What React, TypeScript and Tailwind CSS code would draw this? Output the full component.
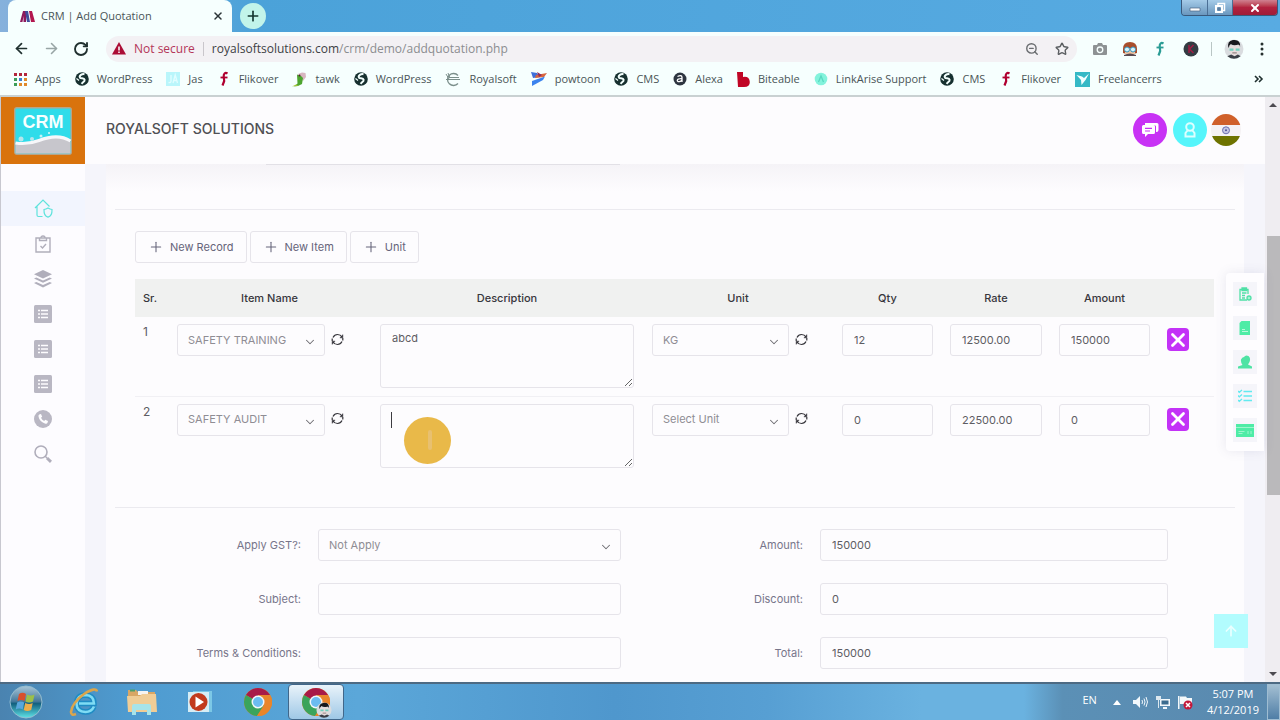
import type { ReactNode } from "react";
import { ArrowLeft, ArrowRight, RotateCw, Star, ZoomOut, Plus, X, ChevronDown, ArrowUp } from "lucide-react";

const GlobeIcon = () => (
  <svg viewBox="0 0 14 14" className="size-3.5">
    <circle cx="7" cy="7" r="6.8" fill="#16302f" />
    <path d="M9.5 2.2C7 1.6 3.8 3.6 5 5.6c.8 1.2 4.200.2 4.600 2.200.3 1.700-1.800 2.400-3 4" fill="none" stroke="#f3fffd" strokeWidth="2" />
    <path d="M1.500 6.500 4 8.500" stroke="#f3fffd" strokeWidth="1.300" />
  </svg>
);

const FlikoverIcon = ({ color = "#b00030" }: { color?: string }) => (
  <svg viewBox="0 0 14 16" className="h-4 w-3.5" fill="none" stroke={color}>
    <path d="M10.500 2.500C8 1 6.600 3 6.700 5.500L7.200 10 5.500 14.500" strokeWidth="2.200" />
    <path d="M3.500 6.500H10.500" strokeWidth="1.800" />
  </svg>
);

const AppsIcon = () => (
  <svg viewBox="0 0 13 13" className="size-[13px]">
    <path d="M0 0h3v3H0zM5 0h3v3H5zM10 0h3v3h-3z" fill="#b3263c" />
    <path d="M0 5h3v3H0z" fill="#3c9d58" />
    <path d="M5 5h3v3H5z" fill="#3c7fd0" />
    <path d="M10 5h3v3h-3zM5 10h3v3H5zM10 10h3v3h-3z" fill="#e08a2a" />
    <path d="M0 10h3v3H0z" fill="#3c9d58" />
  </svg>
);

const JasIcon = () => (
  <svg viewBox="0 0 14 14" className="size-3.5">
    <path d="M0 0h14v14H0z" fill="#b9f6fb" />
    <path d="M5 3v6q0 2-2.500 1.500M7 11l2.200-8L11.500 11M8 8.500h3" fill="none" stroke="#e2fdff" strokeWidth="1.300" />
  </svg>
);

const TawkIcon = () => (
  <svg viewBox="0 0 15 15" className="size-[15px]">
    <path d="M6 2 10 .5 13.500 1 14 5l-3 4-2-4z" fill="#d8b6c0" />
    <path d="M5 2.500 9 4l2 2-1 6-4 2-4 .5 3.500-3z" fill="#4da52f" />
    <path d="M0 14.500 4 12.500l3 1z" fill="#a6c43a" />
    <circle cx="7.500" cy="3.500" r="1" fill="#523" />
  </svg>
);

const RoyalsoftIcon = () => (
  <svg viewBox="0 0 16 15" className="h-[15px] w-4" fill="none" stroke="#7b8f8b">
    <path d="M13 3.500A6 6 0 1 0 13 11.500" strokeWidth="1.300" />
    <path d="M1 2l3 5M3 1l2 5M1 7.500h14M4 5.500h10" />
  </svg>
);

const PowtoonIcon = () => (
  <svg viewBox="0 0 16 14" className="h-3.5 w-4">
    <path d="M0 0 6 1 9 5 2 6z" fill="#3f6fd9" />
    <path d="M5 3 16 1 13 5 4 6z" fill="#d8653d" />
    <path d="M6 0 11 3 8 5z" fill="#8e2a5e" />
    <path d="M1 9 14 4.500 12 8 1 14z" fill="#3b83ee" />
  </svg>
);

const AlexaIcon = () => (
  <svg viewBox="0 0 14 14" className="size-3.5">
    <circle cx="7" cy="7" r="6.500" fill="#2d3540" />
    <path d="M4.500 4.500Q9 2.500 9 5.500V10M9 6.700C3 6.300 3.500 10 6.200 9.700 8 9.500 9 8 9 7.500" fill="none" stroke="#fff" strokeWidth="1.300" />
  </svg>
);

const BiteableIcon = () => (
  <svg viewBox="0 0 13 15" className="h-[15px] w-[13px]">
    <path d="M0 0h6v5q6.500-1 6.800 5Q13 15 7 15H1z" fill="#c00625" />
  </svg>
);

const LinkAriseIcon = () => (
  <svg viewBox="0 0 14 14" className="size-3.5">
    <circle cx="7" cy="7" r="6.300" fill="#83f3dc" />
    <path d="M4.500 10 7 4l2.500 6" fill="none" stroke="#58d9c0" strokeWidth="1.300" />
  </svg>
);

const FreelancerIcon = () => (
  <svg viewBox="0 0 15 15" className="size-[15px]">
    <path d="M0 0h15v15H0z" fill="#35b9c6" />
    <path d="M1.500 3 7 4.500 9 6 14 1.500 10.500 8 6.500 13 6 8z" fill="#f2ffff" />
  </svg>
);

const bookmarks: { label: string; icon: ReactNode }[] = [
  { label: "Apps", icon: <AppsIcon /> },
  { label: "WordPress", icon: <GlobeIcon /> },
  { label: "Jas", icon: <JasIcon /> },
  { label: "Flikover", icon: <FlikoverIcon /> },
  { label: "tawk", icon: <TawkIcon /> },
  { label: "WordPress", icon: <GlobeIcon /> },
  { label: "Royalsoft", icon: <RoyalsoftIcon /> },
  { label: "powtoon", icon: <PowtoonIcon /> },
  { label: "CMS", icon: <GlobeIcon /> },
  { label: "Alexa", icon: <AlexaIcon /> },
  { label: "Biteable", icon: <BiteableIcon /> },
  { label: "LinkArise Support", icon: <LinkAriseIcon /> },
  { label: "CMS", icon: <GlobeIcon /> },
  { label: "Flikover", icon: <FlikoverIcon /> },
  { label: "Freelancerrs", icon: <FreelancerIcon /> },
];

function Face({ className }: { className: string }) {
  return (
    <svg viewBox="0 0 18 18" className={className}>
      <circle cx="9" cy="9" r="8.500" fill="#d9dcdf" />
      <path d="M4 8Q2.500 2 8 1 15 0 14.500 7L13 5Q9 6.500 6 4.500z" fill="#17191d" />
      <path d="M5 5.500Q9 7 14 5.500V11Q12.500 15 9.500 15 6 15 5 11z" fill="#e6dcdb" />
      <path d="M5 8.500h3.500v2H5zM10.500 8.500H14v2h-3.500z" fill="#6fd0be" />
      <path d="M7.500 12.500h4" stroke="#8b7a7a" />
      <path d="M3 15.500 6.500 14l3 1.500 3-1.500 2.500 1.500Q9 20 3 15.500z" fill="#3a3f46" />
    </svg>
  );
}

function BrowserChrome() {
  return (
    <div className="shrink-0 font-['Open_Sans',sans-serif] text-[#4a5557]">
      <div className="flex h-8 items-end bg-linear-to-r from-[#86b1dc] via-[#4ba2d9] via-20% to-[#58abe2]">
        <div className="ml-2 flex h-8 w-56 items-center rounded-t-lg bg-[#f6fffe] pr-1.5 pl-3">
          <svg viewBox="0 0 15 11" className="h-[11px] w-[15px]">
            <path d="M0 11 3 0h3v11H3.500V5L2.500 11z" fill="#8d1a5c" />
            <path d="M5 0h3l2 11H7z" fill="#3f4d9c" />
            <path d="M9 0h3l3 11h-4z" fill="#b3174f" />
          </svg>
          <span className="ml-1.5 flex-1 text-[11px]">CRM | Add Quotation</span>
          <button aria-label="Close tab" className="flex size-4 items-center justify-center text-[#2b3537]">
            <X className="size-3" strokeWidth={3} />
          </button>
        </div>
        <button aria-label="New tab" className="mb-[3px] ml-2 flex size-[26px] items-center justify-center rounded-full bg-[#c2f4ea] text-[#14352f]">
          <Plus className="size-4" strokeWidth={2.5} />
        </button>
        <div className="mr-[2px] ml-auto flex h-4 self-start overflow-hidden rounded-b border border-t-0 border-[#39597c]">
          <button aria-label="Minimize" className="flex w-[26px] items-center justify-center border-r border-[#4b6f95] bg-linear-to-b from-[#a5cbe8] to-[#6a97be]">
            <svg viewBox="0 0 12 6" className="mt-1 h-1.5 w-3">
              <path d="M1 1h10v3H1z" fill="#fff" stroke="#476283" strokeWidth=".7" />
            </svg>
          </button>
          <button aria-label="Restore" className="flex w-[25px] items-center justify-center border-r border-[#4b6f95] bg-linear-to-b from-[#a5cbe8] to-[#6a97be]">
            <svg viewBox="0 0 12 12" className="size-3" fill="none">
              <path d="M4 3V1.500h6.500v7H9" stroke="#fff" strokeWidth="1.500" />
              <path d="M2 4h6v6H2z" stroke="#fff" strokeWidth="2" />
              <path d="M4 6h2v2H4z" stroke="#476283" strokeWidth=".8" />
            </svg>
          </button>
          <button aria-label="Close" className="flex w-11 items-center justify-center bg-linear-to-b from-[#cf8091] via-[#b2213f] to-[#a01c38] text-white">
            <X className="size-3" strokeWidth={4} />
          </button>
        </div>
      </div>

      <div className="flex h-[33px] items-center bg-[#f6fffe] pr-4 pl-3">
        <button aria-label="Back" className="flex w-[18px] justify-center text-[#20302f]">
          <ArrowLeft className="size-[17px]" strokeWidth={2.4} />
        </button>
        <button aria-label="Forward" className="ml-3 flex w-[18px] justify-center text-[#98a5a5]">
          <ArrowRight className="size-[17px]" strokeWidth={2.2} />
        </button>
        <button aria-label="Reload" className="ml-3 flex w-[18px] justify-center text-[#20302f]">
          <RotateCw className="size-4" strokeWidth={2.8} />
        </button>
        <div className="ml-4 flex h-[26px] flex-1 items-center rounded-full bg-[#f3f1f4] pr-2 pl-1.5 text-xs">
          <svg viewBox="0 0 14 13" className="h-[13px] w-3.5">
            <path d="M7 0 14 12.500H0z" fill="#ab0c35" />
            <path d="M7 4.500v4M7 9.500v1.500" stroke="#fff" strokeWidth="1.500" />
          </svg>
          <span className="ml-2 text-[#b43558]">Not secure</span>
          <span className="mx-2 h-3.5 w-px bg-[#c9c6cb]" />
          <span className="flex-1 whitespace-nowrap text-[#3d4144]">
            royalsoftsolutions.com<span className="text-[#8b8d90]">/crm/demo/addquotation.php</span>
          </span>
          <button aria-label="Zoom" className="text-[#6a6d70]">
            <ZoomOut className="size-3.5" strokeWidth={2.4} />
          </button>
          <button aria-label="Bookmark this page" className="ml-4 text-[#5b5e61]">
            <Star className="size-3.5" strokeWidth={2.4} />
          </button>
        </div>
        <div className="ml-4 flex items-center gap-4">
          <svg viewBox="0 0 14 12" className="h-3 w-3.5">
            <path d="M1 2h3l1-2h4l1 2h3q1 0 1 1v8q0 1-1 1H1q-1 0-1-1V3q0-1 1-1z" fill="#8d9294" />
            <circle cx="7" cy="6.800" r="2.800" fill="none" stroke="#f6fffe" strokeWidth="1.300" />
          </svg>
          <svg viewBox="0 0 14 14" className="size-3.5">
            <path d="M0 7Q0 0 7 0t7 7v4l-7 2-7-2z" fill="#a94e2c" />
            <path d="M2 6h10v6H2z" fill="#efc3a2" />
            <circle cx="4" cy="7.500" r="2.500" fill="#d7f4fc" stroke="#3794bd" />
            <circle cx="10" cy="7.500" r="2.500" fill="#d7f4fc" stroke="#3794bd" />
            <path d="M1 13q6-3 12 0v1H1z" fill="#5a4a50" />
          </svg>
          <FlikoverIcon color="#2b9c95" />
          <svg viewBox="0 0 16 16" className="size-4">
            <circle cx="8" cy="8" r="7.500" fill="#333b42" />
            <path d="M6 4v8M10.500 4 6.500 8l4 4" fill="none" stroke="#a01c44" strokeWidth="1.500" />
          </svg>
          <span className="-mx-1 h-3.5 w-px bg-[#b9c6c5]" />
          <Face className="size-5" />
          <button aria-label="Menu">
            <svg viewBox="0 0 4 14" className="h-3.5 w-1" fill="#26302f">
              <circle cx="2" cy="2" r="1.500" />
              <circle cx="2" cy="7" r="1.500" />
              <circle cx="2" cy="12" r="1.500" />
            </svg>
          </button>
        </div>
      </div>

      <nav className="flex h-8 items-center border-b-2 border-[#c9d1d2] bg-[#f6fffe] pr-4 pb-0.5 pl-3.5">
        <ul className="mr-[92px] flex flex-1 items-center justify-between text-[11px]">
          {bookmarks.map((b, i) => (
            <li key={i}>
              <a href="#" className="flex items-center gap-2 whitespace-nowrap">
                {b.icon}
                {b.label}
              </a>
            </li>
          ))}
        </ul>
        <button aria-label="More bookmarks" className="text-[#20302f]">
          <svg viewBox="0 0 10 8" className="h-2 w-2.5" fill="none" stroke="currentColor" strokeWidth="1.600">
            <path d="M1 1l3 3-3 3M5 1l3 3-3 3" />
          </svg>
        </button>
      </nav>
    </div>
  );
}

const ListIcon = () => (
  <svg viewBox="0 0 18 18" className="size-[18px]">
    <rect width="18" height="18" rx="1.500" fill="#b9b7c3" />
    <path d="M4 5.500h2M4 9h2M4 12.500h2M7 5.500H14M7 9H14M7 12.500H14" stroke="#fdfcfe" strokeWidth="1.500" />
  </svg>
);

const sideItems = [
  {
    name: "Dashboard",
    icon: (
      <svg viewBox="0 0 19 19" className="size-[19px]" fill="none" stroke="#5fe3dc" strokeWidth="1.200">
        <path d="M1 9 9 1l6.500 6.500M3 7.500V16q0 1.500 1.500 1.500H8.500" />
        <path d="M14 9q2 1.200 4 1.500.3 6.500-4 7.700-4.300-1.200-4-7.700 2-.3 4-1.500z" />
      </svg>
    ),
  },
  {
    name: "Tasks",
    icon: (
      <svg viewBox="0 0 18 18" className="size-[18px]" fill="none" stroke="#b0aebb" strokeWidth="1.400">
        <path d="M2 3h14v14H2zM5.500 3v2.500h7V3" />
        <path d="M7 3q0-2 2-2t2 2M6.500 11l2 2 3.500-4" />
      </svg>
    ),
  },
  {
    name: "Layers",
    icon: (
      <svg viewBox="0 0 18 18" className="size-[18px]" fill="#b0aebb">
        <path d="M9 0l9 4.200L9 8.400 0 4.200z" />
        <path d="M0 8.500l2.300-1L9 10.500l6.700-3 2.300 1-9 4.200z" />
        <path d="M0 13l2.300-1L9 15l6.700-3 2.300 1-9 4.500z" />
      </svg>
    ),
  },
  { name: "Leads", icon: <ListIcon /> },
  { name: "Quotations", icon: <ListIcon /> },
  { name: "Invoices", icon: <ListIcon /> },
  {
    name: "Calls",
    icon: (
      <svg viewBox="0 0 18 18" className="size-[18px]">
        <circle cx="9" cy="9" r="9" fill="#b9b7c3" />
        <path d="M5.200 4.500 7 4l1.200 2.800-1.200 1q1 2.200 3.200 3.200l1-1.200L14 11l-.5 1.800Q13 14 11.500 13.700 5.500 12 4.500 6.500 4.300 5 5.200 4.500z" fill="#fdfcfe" />
      </svg>
    ),
  },
  {
    name: "Search",
    icon: (
      <svg viewBox="0 0 18 18" className="size-[18px]" fill="none" stroke="#b0aebb">
        <circle cx="7" cy="7" r="6" strokeWidth="1.600" />
        <path d="M11 11l2 2" strokeWidth="1.500" />
        <path d="M13 13l4 3.800" strokeWidth="3" />
      </svg>
    ),
  },
];

function Sidebar() {
  return (
    <aside className="flex w-[85px] shrink-0 flex-col border-l border-[#c8c8d0] bg-[#fdfcff]">
      <a href="#" aria-label="CRM home" className="flex h-[67px] items-center justify-center bg-[#d9730d]">
        <svg viewBox="0 0 58 48" className="h-12 w-[58px]">
          <rect x=".7" y=".7" width="56.600" height="46.600" rx="2" fill="#2fdcea" stroke="#b5a489" strokeWidth="1.400" />
          <path d="M1.500 36Q13 38 25 33.500 44 26 56.500 35V46.500h-55z" fill="#c7c6cc" />
          <path d="M1.500 36Q13 38 25 33.500 44 26 56.500 34" fill="none" stroke="#f7f7fa" strokeWidth="3" />
          <circle cx="7" cy="32" r="2.500" fill="#b5e6ec" />
          <circle cx="18" cy="32" r="2" fill="#b5e6ec" />
          <circle cx="27" cy="29" r="1.500" fill="#c9f3f6" />
          <circle cx="35" cy="26" r="1" fill="#d9fafb" />
          <text x="29" y="21" textAnchor="middle" fontSize="18" fontWeight="700" fill="#f8ffff" fontFamily="Liberation Sans, sans-serif">
            CRM
          </text>
        </svg>
      </a>
      <ul className="mt-[27px]">
        {sideItems.map((item, i) => (
          <li key={item.name}>
            <a
              href="#"
              aria-label={item.name}
              className={`flex h-[35px] items-center justify-center ${i === 0 ? "bg-[#f2f5fe]" : ""}`}
            >
              {item.icon}
            </a>
          </li>
        ))}
      </ul>
    </aside>
  );
}

function Header() {
  return (
    <header className="flex h-[67px] items-center bg-[#fdfcfe] pr-6 pb-0.5 pl-[21px]">
      <h1 className="pb-0.5 text-sm font-medium text-[#505055]">ROYALSOFT SOLUTIONS</h1>
      <div className="ml-auto flex items-center gap-1.5">
        <button aria-label="Messages" className="flex size-[34px] items-center justify-center rounded-full bg-[#c832f5]">
          <svg viewBox="0 0 18 16" className="h-4 w-[18px]">
            <path d="M4 1h12q1.500 0 1.500 1.500V8Q17.500 10 15.500 10H15V4.500Q15 3.500 14 3.500H4z" fill="#fff" />
            <path d="M2.500 3h10Q14 3 14 4.500v6q0 1.500-1.500 1.500H7l-3 3v-3H2.500Q1 12 1 10.500v-6Q1 3 2.500 3z" fill="#fff" />
            <path d="M4 6.300h7M4 9h5" stroke="#c832f5" strokeWidth="1.200" />
          </svg>
        </button>
        <button aria-label="Account" className="flex size-[34px] items-center justify-center rounded-full bg-[#55f5fb]">
          <svg viewBox="0 0 12 16" className="h-4 w-3" fill="none" stroke="#ddffff" strokeWidth="2">
            <circle cx="6" cy="5" r="3.800" />
            <path d="M3.500 8.500 1.500 11v3.500h9V11l-2-2.500" />
          </svg>
        </button>
        <button aria-label="Language" className="-ml-0.5">
          <svg viewBox="1 1 30 32" className="h-8 w-[30px]">
            <clipPath id="flag">
              <ellipse cx="16" cy="17" rx="15" ry="16" />
            </clipPath>
            <g clipPath="url(#flag)">
              <path d="M0 0h32v12H0z" fill="#d0602a" />
              <path d="M0 12h32v11H0z" fill="#f5f2f4" />
              <path d="M0 23h32v11H0z" fill="#6e7300" />
            </g>
            <circle cx="16" cy="17.300" r="3.500" fill="#c5c6e4" stroke="#6c70b0" />
            <circle cx="16" cy="17.300" r="1" fill="#4d5299" />
          </svg>
        </button>
      </div>
    </header>
  );
}

const field =
  "h-8 w-full rounded-[3px] border border-[#e6e4ea] bg-[#fdfcfe] px-[11px] text-[11px] text-[#5d5c63] outline-none";

function SelectBox({ id, label, options }: { id?: string; label?: string; options: string[] }) {
  return (
    <div className="relative min-w-0 flex-1">
      <select id={id} aria-label={label} className={`${field} appearance-none pr-7 pl-2.5 text-[#8f8d94]`}>
        {options.map((o) => (
          <option key={o}>{o}</option>
        ))}
      </select>
      <ChevronDown className="pointer-events-none absolute top-[11px] right-2 size-3.5 text-[#6d6c72]" strokeWidth={1.8} />
    </div>
  );
}

function Refresh({ label }: { label: string }) {
  return (
    <button aria-label={label} className="ml-1.5 shrink-0 pb-0.5">
      <svg viewBox="0 0 13 13" className="size-[13px]" fill="none" stroke="#35343a" strokeWidth="1.200">
        <path d="M2 4.500Q3.500 1.500 6.500 1.500 9.500 1.500 11 4M11 8.500Q9.500 11.500 6.500 11.500 3.500 11.500 2 9M1.200 5.500V8M11.800 5v2.500" />
        <path d="M11.800 1.500V4.800H8.800M1.200 11.500V8.200h3" fill="#35343a" strokeWidth=".6" />
      </svg>
    </button>
  );
}

const rows = [
  { item: "SAFETY TRAINING", description: "abcd", unit: "KG", qty: "12", rate: "12500.00", amount: "150000" },
  { item: "SAFETY AUDIT", description: "", unit: "Select Unit", qty: "0", rate: "22500.00", amount: "0" },
];

function ItemsTable() {
  return (
    <table className="mt-4 w-full table-fixed border-collapse text-xs text-[#5d5c63]">
      <colgroup>
        <col className="w-[33px]" />
        <col className="w-[203px]" />
        <col className="w-[272px]" />
        <col className="w-[190px]" />
        <col className="w-[109px]" />
        <col className="w-[108px]" />
        <col className="w-[109px]" />
        <col className="w-[55px]" />
      </colgroup>
      <thead>
        <tr className="h-[38px] bg-[#f0f1f0] text-[11px] text-[#37363c]">
          <th className="pl-2 text-left font-medium">Sr.</th>
          {["Item Name", "Description", "Unit", "Qty", "Rate", "Amount"].map((h) => (
            <th key={h} className="font-medium">
              {h}
            </th>
          ))}
          <th />
        </tr>
      </thead>
      <tbody>
        {rows.map((row, i) => (
          <tr key={row.item} className="h-[79px] border-b border-[#f1f0f4] align-top last:border-b-0">
            <td className="pt-[7px] pl-2">{i + 1}</td>
            <td className="px-[9px] pt-[7px]">
              <div className="flex items-center pr-[18px]">
                <SelectBox label={`Item ${i + 1}`} options={[row.item]} />
                <Refresh label="Reload items" />
              </div>
            </td>
            <td className="px-[9px] pt-[7px]">
              <div className="relative">
                <textarea
                  aria-label={`Description ${i + 1}`}
                  defaultValue={row.description}
                  className={`${field} block h-16 py-1.5`}
                />
                {i === 1 && (
                  <>
                    <span className="absolute top-2 left-[11px] h-4 w-px bg-[#3c3b41]" />
                    <span className="absolute top-[13px] left-6 flex size-[47px] items-center justify-center rounded-full bg-[#e9b949]">
                      <span className="ml-1 h-5 w-1 rounded bg-[#e8c070]" />
                    </span>
                  </>
                )}
              </div>
            </td>
            <td className="px-[9px] pt-[7px]">
              <div className="flex items-center pr-4">
                <SelectBox label={`Unit ${i + 1}`} options={[row.unit]} />
                <Refresh label="Reload units" />
              </div>
            </td>
            <td className="px-[9px] pt-[7px]">
              <input aria-label={`Qty ${i + 1}`} defaultValue={row.qty} className={field} />
            </td>
            <td className="px-2 pt-[7px]">
              <input aria-label={`Rate ${i + 1}`} defaultValue={row.rate} className={field} />
            </td>
            <td className="px-[9px] pt-[7px]">
              <input aria-label={`Amount ${i + 1}`} defaultValue={row.amount} className={field} />
            </td>
            <td className="px-2 pt-[11px]">
              <button
                aria-label={`Remove row ${i + 1}`}
                className="flex h-[23px] w-[22px] items-center justify-center rounded-sm bg-[#c332f7] text-white"
              >
                <X className="size-[22px]" strokeWidth={3} />
              </button>
            </td>
          </tr>
        ))}
      </tbody>
    </table>
  );
}

function Totals() {
  return (
    <form className="mx-[9px] flex border-t border-[#ebeaef] pt-[21px] text-[11px] text-[#77758a]">
      <div className="flex w-[506px] shrink-0 flex-col gap-[22px]">
        <div className="flex items-center">
          <label htmlFor="gst" className="w-[186px] text-right">
            Apply GST?:
          </label>
          <div className="ml-[17px] flex flex-1">
            <SelectBox id="gst" options={["Not Apply", "Apply"]} />
          </div>
        </div>
        {[
          ["subject", "Subject:"],
          ["terms", "Terms & Conditions:"],
        ].map(([id, label]) => (
          <div key={id} className="flex items-center">
            <label htmlFor={id} className="w-[186px] text-right">
              {label}
            </label>
            <div className="ml-[17px] flex-1">
              <input id={id} className={field} />
            </div>
          </div>
        ))}
      </div>
      <div className="mr-[67px] flex flex-1 flex-col gap-[22px]">
        {[
          ["amount", "Amount:", "150000"],
          ["discount", "Discount:", "0"],
          ["total", "Total:", "150000"],
        ].map(([id, label, value]) => (
          <div key={id} className="flex items-center">
            <label htmlFor={id} className="w-[182px] text-right">
              {label}
            </label>
            <div className="ml-[17px] flex-1">
              <input id={id} defaultValue={value} className={field} />
            </div>
          </div>
        ))}
      </div>
    </form>
  );
}

const quickLinks = [
  {
    name: "Add task",
    icon: (
      <svg viewBox="0 0 14 14" className="size-3.5" fill="none" stroke="#4fe0a6" strokeWidth="1.300">
        <path d="M9 13H2V2.500h8V7M4 1h4.500v2.500H4zM4 6h4.500M4 8.500h3M4 11h3" />
        <circle cx="11" cy="11" r="2" fill="#a5f3d3" />
      </svg>
    ),
  },
  {
    name: "Documents",
    icon: (
      <svg viewBox="0 0 14 14" className="size-3.5">
        <path d="M3.500 0H12v14H1.500V2z" fill="#4eeca6" />
        <path d="M4 8.500h3M4 10.500h6" stroke="#b9f8dc" />
      </svg>
    ),
  },
  {
    name: "Contacts",
    icon: (
      <svg viewBox="0 0 14 14" className="size-3.5" fill="#4ee3a4">
        <path d="M3 4.500Q4 2 6 2 7.500-.5 10.500 1 13 3 11.500 7L10 9.500 14 11.500v2H0v-2L4.500 10Q2.500 7 3 4.500z" />
      </svg>
    ),
  },
  {
    name: "Checklist",
    icon: (
      <svg viewBox="0 0 14 14" className="size-3.5" fill="none" stroke="#62eaf0" strokeWidth="1.300">
        <path d="M5.500 2.500H14M5.500 7H14M5.500 11.500H14M0 2l1.300 1.300L4 1M0 6.500l1.300 1.300L4 5.500M0 11l1.300 1.300L4 10" />
      </svg>
    ),
  },
  {
    name: "Payments",
    icon: (
      <svg viewBox="0 0 18 13" className="h-[13px] w-[18px]">
        <path d="M0 0h18v13H0z" fill="#4eeca6" />
        <path d="M0 3.500h18" stroke="#9df5cd" />
        <path d="M2.500 7.500h6M2.500 9.500h4M12 7v3M15 7v3" stroke="#9df5cd" />
      </svg>
    ),
  },
];

function CrmPage() {
  return (
    <div className="relative flex min-h-0 flex-1 overflow-hidden bg-[#f4f3f8] font-['Inter',sans-serif]">
      <Sidebar />
      <div className="flex min-w-0 flex-1 flex-col">
        <Header />
        <main className="min-h-0 flex-1 overflow-hidden bg-[#f5f5fb] px-[21px]">
          <div className="min-h-full bg-[#fdfcfe]">
            <div className="h-[45px] bg-linear-to-b from-[#f5f3f7] to-[#fdfcfe] to-60%">
              <div className="ml-40 h-px w-[354px] bg-[#e2e0e6]" />
            </div>
            <hr className="mx-[9px] border-[#ebeaef]" />
            <div className="mr-[30px] ml-[29px] min-h-[297px] pt-[21px]">
              <div className="flex gap-[3px] text-[11px] text-[#66647a]">
                {["New Record", "New Item", "Unit"].map((label) => (
                  <button
                    key={label}
                    className="flex h-8 items-center gap-1.5 rounded-[3px] border border-[#e6e4ea] px-3"
                  >
                    <Plus className="size-4" strokeWidth={1.6} />
                    {label}
                  </button>
                ))}
              </div>
              <ItemsTable />
            </div>
            <Totals />
          </div>
        </main>
      </div>

      <div className="flex w-[15px] shrink-0 flex-col items-center justify-between bg-[#efedf1] py-1.5">
        <svg viewBox="0 0 8 4" className="h-1 w-2">
          <path d="M4 0l4 4H0z" fill="#4c4a50" />
        </svg>
        <svg viewBox="0 0 8 4" className="h-1 w-2">
          <path d="M0 0h8L4 4z" fill="#4c4a50" />
        </svg>
      </div>
      <div className="absolute top-[139px] right-0 h-[259px] w-[13px] bg-[#bab9bb]" />

      <div className="absolute top-44 right-4 flex flex-col gap-2.5 rounded-l bg-[#fefdff] px-[7px] py-[9px] shadow-[0_0_12px_rgba(80,80,130,0.12)]">
        {quickLinks.map((q) => (
          <a key={q.name} href="#" aria-label={q.name} className="flex size-6 items-center justify-center bg-[#f5f5fa]">
            {q.icon}
          </a>
        ))}
      </div>
      <button aria-label="Back to top" className="absolute right-8 bottom-[34px] flex size-[34px] items-center justify-center bg-[#b2fcfe] text-[#eaffff]">
        <ArrowUp className="size-4" strokeWidth={2.5} />
      </button>
    </div>
  );
}

function ChromeLogo({ avatar = false }: { avatar?: boolean }) {
  return (
    <span className="relative">
      <svg viewBox="0 0 28 28" className="size-7">
        <circle cx="14" cy="14" r="14" fill="#e9852b" />
        <path d="M14 14 1.900 7A14 14 0 0 1 26.100 7z" fill="#a81a48" />
        <path d="M14 14 1.900 7A14 14 0 0 0 13 28L20 17.500z" fill="#3aa45c" />
        <path d="M14 14V7h12.100A14 14 0 0 1 13 28L20 17z" fill="#e9852b" />
        <circle cx="14" cy="14" r="6.500" fill="#f3f6fa" />
        <circle cx="14" cy="14" r="5" fill="#6cbcf1" />
      </svg>
      {avatar && <Face className="absolute -right-0.5 -bottom-0.5 size-4" />}
    </span>
  );
}

function Taskbar() {
  return (
    <footer className="flex h-[38px] shrink-0 items-center border-t-2 border-[#4d6a83] bg-[linear-gradient(90deg,#4a83b0_0%,#4e9bd0_10%,#5ba7d9_28%,#4f97cd_48%,#579fd3_60%,#6ab2e0_72%,#6ab2e0_80%,#5b90b6_83%,#5a89ae_100%)] font-['Open_Sans',sans-serif] text-white">
      <button aria-label="Start" className="flex w-[52px] justify-center">
        <svg viewBox="0 0 34 34" className="size-[34px]">
          <defs>
            <linearGradient id="orb" x1="0" y1="0" x2="0" y2="1">
              <stop offset="0" stopColor="#a9c6d8" />
              <stop offset=".48" stopColor="#45799c" />
              <stop offset=".55" stopColor="#12607f" />
              <stop offset="1" stopColor="#5fe4e8" />
            </linearGradient>
          </defs>
          <circle cx="17" cy="17" r="16" fill="url(#orb)" stroke="#93bdd0" />
          <path d="M10 9q3.500-2.500 7 0l-1.500 7q-3.500-2-7 0z" fill="#d8502c" />
          <path d="M18 9.500q4 2 7.500 0L24 16.500q-4 2-7.500 0z" fill="#9cc04a" />
          <path d="M8.200 17.500q3.500-2 7 0l-1.500 7q-3.500-2-7 0z" fill="#58a7dc" />
          <path d="M16.200 18q4 2 7.500 0l-1.500 7q-4 2-7.500 0z" fill="#ecae4a" />
        </svg>
      </button>
      <div className="ml-1 flex h-full items-center gap-0.5">
        <button aria-label="Internet Explorer" className="flex w-14 justify-center">
          <svg viewBox="0 0 30 30" className="size-[30px]" fill="none">
            <path d="M25 19.500Q22.500 25 16.500 25 7.500 24.500 7.500 16.500 8 8 16.500 8q8.500.5 8.500 8.500H10" stroke="#1f8cc4" strokeWidth="5.500" />
            <path d="M25 19.500Q22.500 25 16.500 25 7.500 24.500 7.500 16.500 8 8 16.500 8q8.500.5 8.500 8.500H10" stroke="#7fdcf4" strokeWidth="2.500" />
            <path d="M28 4.500Q27-.5 15 7 3 16 2 25q0 4 5 2" stroke="#dba54c" strokeWidth="2.600" />
          </svg>
        </button>
        <button aria-label="Windows Explorer" className="flex w-14 justify-center">
          <svg viewBox="0 0 32 28" className="h-7 w-8">
            <path d="M2 2h8l2 2h17v20H2z" fill="#d9a765" />
            <path d="M4 1.500h5v2H4z" fill="#4ba06c" />
            <path d="M12 3h10v4H12z" fill="#f6f3ef" />
            <path d="M1 8h13l2-2h14l1 18H2z" fill="#f0cd96" />
            <path d="M6 27v-9q0-2 2-2h15q2 0 2 2v9h-4v-5H10v5z" fill="#a7e4ea" />
          </svg>
        </button>
        <button aria-label="Media Player" className="flex w-14 justify-center">
          <svg viewBox="0 0 26 24" className="h-6 w-[26px]">
            <path d="M6 1h19v21H6z" fill="#7cc8e6" />
            <path d="M1 2h21v20H1z" fill="#d6edf5" />
            <circle cx="11.500" cy="12" r="9" fill="#c23a1d" />
            <path d="M8.500 6.500 17 12l-8.500 5.500z" fill="#fff" />
          </svg>
        </button>
        <button aria-label="Google Chrome" className="flex w-14 justify-center">
          <ChromeLogo />
        </button>
        <button
          aria-label="CRM window"
          className="flex h-full w-14 items-center justify-center rounded-sm border border-[#41678a] bg-linear-to-b from-[#e9f3fa] to-[#9fc8e6]"
        >
          <ChromeLogo avatar />
        </button>
      </div>
      <div className="ml-auto flex h-full items-center">
        <span className="mb-1 text-[11px]">EN</span>
        <svg viewBox="0 0 8 5" className="ml-4 h-[5px] w-2">
          <path d="M4 0l4 5H0z" fill="#fff" />
        </svg>
        <svg viewBox="0 0 15 14" className="ml-3 h-3.5 w-[15px]" fill="none" stroke="#f2f8fc">
          <path d="M0 5h3l4-4v12L3 9H0z" fill="#f2f8fc" stroke="none" />
          <path d="M9 5q1 2 0 4M11 3.500q2 3.500 0 7M13 2q3 5 0 10" />
        </svg>
        <svg viewBox="0 0 14 13" className="ml-2 h-[13px] w-3.5">
          <path d="M4 3h10v7H4zM7 11h4v2H7z" fill="#f2f8fc" />
          <path d="M5.500 4.500h7v4h-7z" fill="#3c6c8f" />
          <path d="M0 0h5v4H0zM2 4h1v8H2z" fill="#dce8ef" />
        </svg>
        <svg viewBox="0 0 15 15" className="ml-2 size-[15px]">
          <path d="M0 1h1.500v13H0zM2 1.500h6l1 1.500h5v6H2z" fill="#f4f8fa" />
          <circle cx="10" cy="10" r="4.500" fill="#c4183a" />
          <path d="M8 8l4 4M12 8l-4 4" stroke="#fff" strokeWidth="1.500" />
        </svg>
        <div className="ml-3.5 text-center text-[11px] leading-4">
          <p>5:07 PM</p>
          <p>4/12/2019</p>
        </div>
        <button aria-label="Show desktop" className="ml-2 h-full w-[13px] border border-[#9fbdd2] bg-linear-to-b from-[#a3bfd2] to-[#4f7ea6]" />
      </div>
    </footer>
  );
}

export default function App() {
  return (
    <div className="flex h-screen flex-col overflow-hidden">
      <BrowserChrome />
      <CrmPage />
      <Taskbar />
    </div>
  );
}
